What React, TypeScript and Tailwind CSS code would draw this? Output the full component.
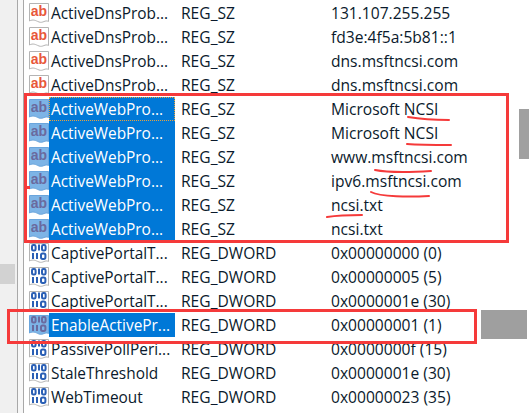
const rows = [
  { name: 'ActiveDnsProb...', type: 'REG_SZ', data: '131.107.255.255', kind: 'sz' },
  { name: 'ActiveDnsProb...', type: 'REG_SZ', data: 'fd3e:4f5a:5b81::1', kind: 'sz' },
  { name: 'ActiveDnsProb...', type: 'REG_SZ', data: 'dns.msftncsi.com', kind: 'sz' },
  { name: 'ActiveDnsProb...', type: 'REG_SZ', data: 'dns.msftncsi.com', kind: 'sz' },
  { name: 'ActiveWebPro...', type: 'REG_SZ', data: 'Microsoft NCSI', kind: 'sz', selected: true, focused: true },
  { name: 'ActiveWebPro...', type: 'REG_SZ', data: 'Microsoft NCSI', kind: 'sz', selected: true },
  { name: 'ActiveWebPro...', type: 'REG_SZ', data: 'www.msftncsi.com', kind: 'sz', selected: true },
  { name: 'ActiveWebPro...', type: 'REG_SZ', data: 'ipv6.msftncsi.com', kind: 'sz', selected: true },
  { name: 'ActiveWebPro...', type: 'REG_SZ', data: 'ncsi.txt', kind: 'sz', selected: true },
  { name: 'ActiveWebPro...', type: 'REG_SZ', data: 'ncsi.txt', kind: 'sz', selected: true },
  { name: 'CaptivePortalT...', type: 'REG_DWORD', data: '0x00000000 (0)', kind: 'dword' },
  { name: 'CaptivePortalT...', type: 'REG_DWORD', data: '0x00000005 (5)', kind: 'dword' },
  { name: 'CaptivePortalT...', type: 'REG_DWORD', data: '0x0000001e (30)', kind: 'dword' },
  { name: 'EnableActivePr...', type: 'REG_DWORD', data: '0x00000001 (1)', kind: 'dword', selected: true },
  { name: 'PassivePollPeri...', type: 'REG_DWORD', data: '0x0000000f (15)', kind: 'dword' },
  { name: 'StaleThreshold', type: 'REG_DWORD', data: '0x0000001e (30)', kind: 'dword' },
  { name: 'WebTimeout', type: 'REG_DWORD', data: '0x00000023 (35)', kind: 'dword' },
]

function RegIcon({ kind, selected }: { kind: string; selected?: boolean }) {
  const paper = selected ? '#7db4e6' : '#ffffff'
  const edge = selected ? '#6aa5dc' : '#b4b4b4'
  const mark = selected ? '#6a6a9e' : kind === 'sz' ? '#e8573a' : '#2a5fb5'
  return (
    <svg width="20" height="22" viewBox="0 0 20 22" className="shrink-0">
      <path
        d="M0.5 1.5H19.5V19.5C16 17.5 14 21.5 10 20C6.5 18.5 4 17 0.5 19Z"
        fill={paper}
        stroke={edge}
        strokeWidth="1"
      />
      {kind === 'sz' ? (
        <text x="10" y="13.5" textAnchor="middle" fontSize="14" fontWeight="700" fill={mark} fontFamily="'Liberation Sans', sans-serif">
          ab
        </text>
      ) : (
        <g fill="none" stroke={mark} strokeWidth="2">
          <rect x="3" y="3" width="3.6" height="5.6" rx="1.4" />
          <path d="M10 2.5V8.5" />
          <rect x="13" y="3" width="3.6" height="5.6" rx="1.4" />
          <path d="M4 11V17" />
          <path d="M8 11V17" />
          <rect x="12" y="11.5" width="4.4" height="5.4" rx="1.6" />
        </g>
      )}
    </svg>
  )
}

export default function App() {
  return (
    <div className="relative flex h-[413px] w-[529px] overflow-hidden bg-white font-['Open_Sans',sans-serif] text-[15.6px] text-[#0a1a2c]">
      <div className="w-[18px] shrink-0 border-r border-[#a8a8a8] bg-[#f0f0f0] pt-[264px]">
        <div className="h-[20px] w-[15px] bg-[#d2d2d2]" />
      </div>
      <div className="w-[6px] shrink-0 border-r border-[#a8a8a8] bg-[#f7f7f7]" />
      <div className="flex-1 pt-px">
        {rows.map((row, i) => (
          <div key={i} className="flex h-[24px] items-center pl-[5px]">
            <RegIcon kind={row.kind} selected={row.selected} />
            <div
              className={
                'h-[24px] w-[126px] shrink-0 overflow-hidden whitespace-nowrap pl-[2px] text-[15.4px] leading-[26px] ' +
                (row.selected ? 'bg-[#0078d7] text-white ' : '') +
                (row.focused ? 'outline-1 -outline-offset-1 outline-dotted outline-[#e8a33d]' : '')
              }
            >
              {row.name}
            </div>
            <div className="ml-[6px] w-[150px] shrink-0 pt-[2px]">{row.type}</div>
            <div className="shrink-0 pt-[2px]">{row.data}</div>
          </div>
        ))}
      </div>

      {/* annotations drawn over the screenshot */}
      <div className="absolute left-[24px] top-[93px] h-[150px] w-[485px] border-[3px] border-[#f53a3a]" />
      <div className="absolute left-[7px] top-[309px] h-[35px] w-[470px] border-[3px] border-[#f53a3a]" />
      <div className="absolute left-[27px] top-[186px] h-[3px] w-[3px] bg-[#f53a3a]" />
      <div className="absolute left-[481px] top-[310px] h-[29px] w-[46px] bg-[#9f9f9f]" />
      <div className="absolute left-[519px] top-[109px] h-[50px] w-[10px] bg-[#a0a0a0]" />
      <svg className="absolute left-0 top-0" width="529" height="413" fill="none" stroke="#f53a3a" strokeWidth="2" strokeLinecap="round">
        <path d="M408 117C420 119 435 120 449 120" />
        <path d="M407 144C420 145 438 145 451 145" />
        <path d="M375 170C390 173 415 172 431 171" />
        <path d="M371 192C380 197 410 197 429 196" />
        <path d="M327 217C340 215 352 215 362 215" />
      </svg>
    </div>
  )
}
